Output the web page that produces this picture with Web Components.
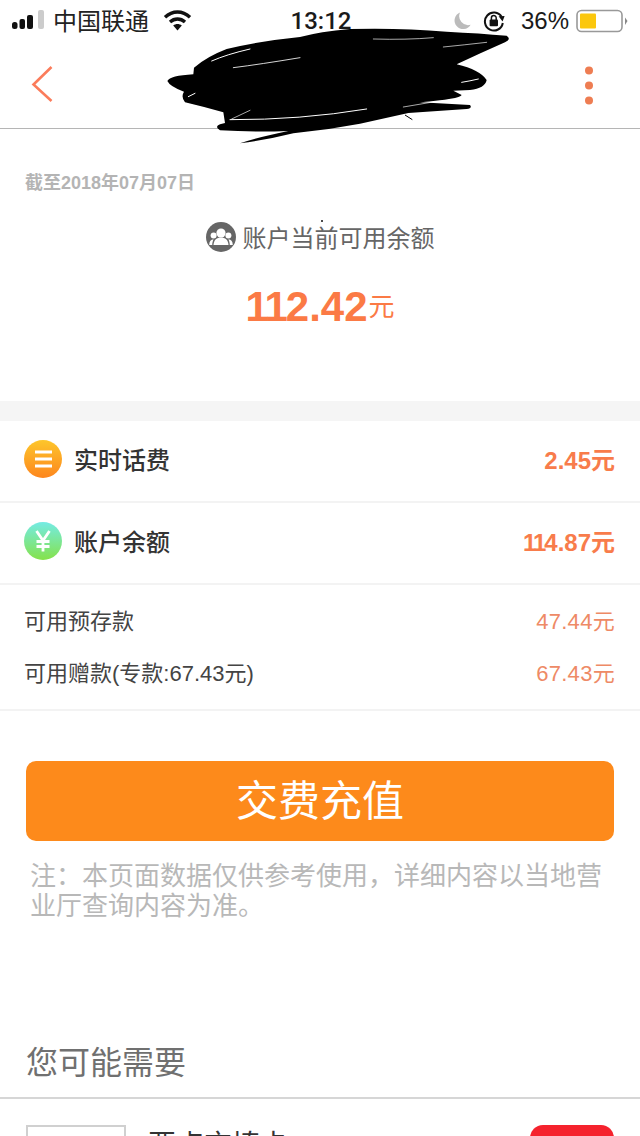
<!DOCTYPE html>
<html lang="zh-CN"><head><meta charset="utf-8"><title>账户余额</title>
<style>
html,body{margin:0;padding:0;background:#fff}
body{width:640px;height:1136px;overflow:hidden;font-family:"Liberation Sans","Noto Sans CJK SC",sans-serif}
</style></head><body>
<app-page>
  <status-bar></status-bar>
  <nav-bar></nav-bar>
  <balance-summary date="截至2018年07月07日" label="账户当前可用余额" amount="112.42"></balance-summary>
  <fee-row kind="bill" label="实时话费" value="2.45元"></fee-row>
  <fee-row kind="yen" label="账户余额" value="114.87元"></fee-row>
  <sub-list>
    <sub-row label="可用预存款" value="47.44元"></sub-row>
    <sub-row label="可用赠款(专款:67.43元)" value="67.43元"></sub-row>
  </sub-list>
  <pay-action label="交费充值" note="注&#xFF1A;本页面数据仅供参考使用&#xFF0C;详细内容以当地营业厅查询内容为准。"></pay-action>
  <recommend-list title="您可能需要" item="要点充填卡" action="现在"></recommend-list>
</app-page>
<script>
const FONT='"Liberation Sans","Noto Sans CJK SC",sans-serif';
const narrow=(s,cls)=>s.replace('11',`<span class="${cls}">11</span>`);
function def(name,html,after){
  customElements.define(name,class extends HTMLElement{
    connectedCallback(){
      if(this.shadowRoot)return;
      const r=this.attachShadow({mode:'open'});
      r.innerHTML=html.replace(/\{\{(\w+)\}\}/g,(m,k)=>this.getAttribute(k)||'');
      if(after)after(this,r);
    }
  });
}
def('app-page',`<style>:host{display:block;position:relative;width:640px;height:1136px;overflow:hidden;background:#fff;font-family:${FONT}}</style><slot></slot>`);

def('status-bar',`<style>
:host{display:grid;grid-template-columns:1fr auto 1fr;align-items:center;height:42px;padding:0 12px;box-sizing:border-box;color:#1a1a1a;font-size:24px}
.l,.r{display:flex;align-items:center}
.l{margin-bottom:2px}
.l span{margin-left:8px;color:#222;margin-bottom:2px}
.l svg.w{margin-left:14px}
.t{font-family:Roboto,"Liberation Sans",sans-serif;font-weight:500;position:relative;left:1px}
.r{justify-content:flex-end}
.pct{margin:0 7px 0 16px}
.bat{display:block}
</style>
<div class="l">
<svg width="33" height="20" viewBox="0 0 33 20"><rect x="0" y="12" width="5.5" height="7" rx="2.5" fill="#111"/><rect x="7.5" y="9" width="5.5" height="10" rx="2" fill="#111"/><rect x="15" y="5" width="6" height="14" rx="2" fill="#111"/><rect x="26" y="0" width="6" height="19" rx="2" fill="#ccc"/></svg>
<span>中国联通</span>
<svg class="w" width="29" height="22" viewBox="0 0 29 22"><path d="M2 8.2C9.5 1.2 19.5 1.2 27 8.2" fill="none" stroke="#111" stroke-width="3.4"/><path d="M7 13C11.5 9 17.5 9 22 13" fill="none" stroke="#111" stroke-width="3.4"/><path d="M10.2 16.6C12.8 14.6 16.2 14.6 18.8 16.6L14.5 21.5Z" fill="#111"/></svg>
</div>
<div class="t">13:12</div>
<div class="r">
<svg width="19" height="18" viewBox="0 0 19 18" style="margin-right:12px"><path d="M8 0.5A8.6 8.6 0 1 0 18.6 12.8A9 9 0 0 1 8 0.5Z" fill="#bbb"/></svg>
<svg width="22" height="22" viewBox="0 0 22 22"><path d="M18.6 6.8A9 9 0 1 0 19.8 13" fill="none" stroke="#111" stroke-width="2"/><path d="M15.6 6.2L21.6 6L19.6 11.4Z" fill="#111"/><rect x="6.6" y="9.6" width="8.4" height="6.6" rx="1" fill="#111"/><path d="M8.4 10V8a2.4 2.4 0 0 1 4.8 0v2" fill="none" stroke="#111" stroke-width="1.5"/></svg>
<span class="pct">36%</span>
<svg class="bat" width="52" height="24" viewBox="0 0 52 24"><rect x="1" y="1.5" width="45" height="21" rx="4.5" fill="#fff" stroke="#999" stroke-width="1.6"/><rect x="4" y="4.5" width="16" height="15" rx="1" fill="#fbc70d"/><path d="M49 8.5L51.5 12L49 16Z" fill="#888"/></svg>
</div>`);

def('nav-bar',`<style>
:host{display:flex;align-items:center;justify-content:space-between;position:relative;height:87px;box-sizing:border-box;border-bottom:1px solid #b5b5b5;padding:0 45px 0 30px}
svg.scribble{position:absolute;left:160px;top:-17px;overflow:visible;z-index:3}
svg{display:block}
</style>
<svg width="24" height="38" viewBox="0 0 24 38"><path d="M21.5 1L3.5 18.5L21.5 35" fill="none" stroke="#fb7c5b" stroke-width="2.6"/></svg>
<svg width="12" height="42" viewBox="0 0 12 42"><circle cx="6" cy="6.5" r="4" fill="#ee7d52"/><circle cx="6" cy="21.5" r="4" fill="#ee7d52"/><circle cx="6" cy="36.5" r="4" fill="#ee7d52"/></svg>
<svg class="scribble" width="360" height="125" viewBox="0 0 1080 375">
<path fill="#000" d="M22 168Q30 152 100 148L102 128Q140 95 200 72Q300 48 420 36Q480 20 570 12Q720 8 860 20Q960 25 1040 32Q1055 42 1035 52Q960 85 890 118Q960 135 980 165Q975 190 930 195L880 197L905 210Q900 222 780 232L930 240Q938 250 920 252L745 264L600 296Q500 315 400 325Q320 345 240 355Q300 335 385 318Q280 322 180 316Q162 305 180 298L195 294L190 262Q130 245 75 232Q62 215 72 200Q30 185 22 168Z"/>
<path fill="none" stroke="#000" stroke-width="3" d="M735 270L757 284"/>
<g fill="none" stroke="#fff" stroke-linecap="round">
<path stroke-width="3" d="M155 108Q200 88 270 72"/>
<path stroke-width="2.5" d="M220 128Q300 118 420 98"/>
<path stroke-width="2" d="M640 42Q740 45 820 38"/>
<path stroke-width="2" d="M850 66Q910 60 980 52"/>
<path stroke-width="3" d="M905 172Q930 168 955 162"/>
<path stroke-width="3" d="M85 215L105 205"/>
<path stroke-width="2" d="M215 282L270 256"/>
<path stroke-width="3" d="M210 284Q420 285 620 252"/>
<path stroke-width="2" d="M730 246Q810 230 900 222"/>
</g></svg>
<slot></slot>`);

def('balance-summary',`<style>
:host{display:block;position:relative;height:292px;box-sizing:border-box;border-bottom:20px solid #f5f5f5;padding-top:42px;background:#fff}
.date{margin-left:25px;font-size:18px;line-height:24px;height:24px;font-weight:700;color:#b4b4b4}
.label{display:flex;justify-content:center;align-items:center;gap:7px;margin-top:24px;height:36px;font-size:24px;color:#666}
.label span{margin-bottom:2px}
.amt{text-align:center;margin-top:24px;height:56px;line-height:56px;color:#fb7a45;font-size:42px;font-weight:700}
.amt small{font-size:26px;font-weight:400;margin-left:1px;position:relative;top:-5px}
.n{letter-spacing:-2px}
.dot{position:absolute;left:321px;top:91px;width:2px;height:2px;background:#111;border-radius:50%}
svg{display:block}
</style>
<div class="date">{{date}}</div>
<div class="dot"></div>
<div class="label">
<svg width="30" height="30" viewBox="0 0 30 30"><circle cx="15" cy="15" r="15" fill="#666"/>
<g fill="#fff"><circle cx="15" cy="11" r="4.6"/><path d="M7.5 23C7.8 18 10.8 15.6 15 15.6S22.2 18 22.5 23Z"/><circle cx="7.6" cy="13.5" r="3"/><path d="M3.2 23C3.2 19.5 5 17.5 7.6 17.3C7 18.6 6.2 20.5 6.2 23Z"/><circle cx="22.4" cy="13.5" r="3"/><path d="M26.8 23C26.8 19.5 25 17.5 22.4 17.3C23 18.6 23.8 20.5 23.8 23Z"/></g></svg>
<span>{{label}}</span></div>
<div class="amt"><span id="a"></span><small>元</small></div>`,(el,r)=>{r.getElementById('a').innerHTML=narrow(el.getAttribute('amount'),'n');});

def('fee-row',`<style>
:host{display:flex;align-items:center;height:82px;box-sizing:border-box;border-bottom:2px solid #f3f3f3;padding:0 25px 5px 24px;background:#fff}
svg{display:block;margin-right:12px}
.l{flex:1;font-size:24px;font-weight:500;color:#333;margin-bottom:1px}
.v{font-size:24px;font-weight:700;color:#f87c4b;margin-bottom:1px}
.n{letter-spacing:-2px}
</style><span id="ic"></span><span class="l">{{label}}</span><span class="v" id="v"></span>`,(el,r)=>{
  const bill=`<svg width="38" height="38" viewBox="0 0 38 38"><defs><linearGradient id="g" x1="0" y1="0" x2="0" y2="1"><stop offset="0" stop-color="#fdc62b"/><stop offset="1" stop-color="#fd861e"/></linearGradient></defs><circle cx="19" cy="19" r="19" fill="url(#g)"/><g fill="#fff"><rect x="11" y="10.5" width="17" height="3"/><rect x="11" y="17.5" width="17" height="3"/><rect x="11" y="24.5" width="17" height="3"/></g></svg>`;
  const yen=`<svg width="38" height="38" viewBox="0 0 38 38"><defs><linearGradient id="g" x1="0" y1="0" x2="0" y2="1"><stop offset="0" stop-color="#74ebe4"/><stop offset="1" stop-color="#85e24a"/></linearGradient></defs><circle cx="19" cy="19" r="19" fill="url(#g)"/><path d="M12.5 9L19 18.5L25.5 9M19 18.5V29.5M12.5 19.5H25.5M12.5 24.5H25.5" fill="none" stroke="#fff" stroke-width="2.8"/></svg>`;
  r.getElementById('ic').innerHTML=el.getAttribute('kind')==='yen'?yen:bill;
  r.getElementById('v').innerHTML=narrow(el.getAttribute('value'),'n');
});

def('sub-list',`<style>:host{display:block;height:126px;box-sizing:border-box;border-bottom:2px solid #f3f3f3;padding-top:8px}</style><slot></slot>`);
def('sub-row',`<style>
:host{display:flex;justify-content:space-between;align-items:center;height:52px;padding:0 25px 0 24px;font-size:22px;color:#444}
.v{color:#ee8a66;letter-spacing:.3px}
</style><span>{{label}}</span><span class="v">{{value}}</span>`);

def('pay-action',`<style>
:host{display:block;padding:50px 26px 0}
.btn{height:80px;box-sizing:border-box;padding-bottom:7px;border-radius:10px;background:#fd8a1b;color:#fff;font-size:42px;display:flex;align-items:center;justify-content:center}
.note{margin:20px 0 0 4px;font-size:26px;line-height:30px;color:#b8b8b8}
</style><div class="btn">{{label}}</div><div class="note">{{note}}</div>`);

def('recommend-list',`<style>
:host{display:block;margin-top:119px}
.h{font-size:32px;line-height:46px;height:46px;color:#707070;padding-left:26px}
.rule{height:2px;background:#d6d6d6;margin-top:11px}
.item{display:flex;align-items:flex-start;padding:26px 26px 0;gap:22px}
.thumb{width:100px;height:80px;box-sizing:border-box;border:2px solid #d0d0d0;flex:none}
.t{flex:1;font-size:28px;line-height:28px;color:#333;margin-top:7px}
.b{width:84px;height:44px;border-radius:13px;background:#f5222d;color:#fff;font-size:24px;display:flex;align-items:flex-start;justify-content:center;padding-top:6px;box-sizing:border-box;flex:none}
</style>
<div class="h">{{title}}</div><div class="rule"></div>
<div class="item"><div class="thumb"></div><div class="t">{{item}}</div><div class="b">{{action}}</div></div>`);
</script>
</body></html>
